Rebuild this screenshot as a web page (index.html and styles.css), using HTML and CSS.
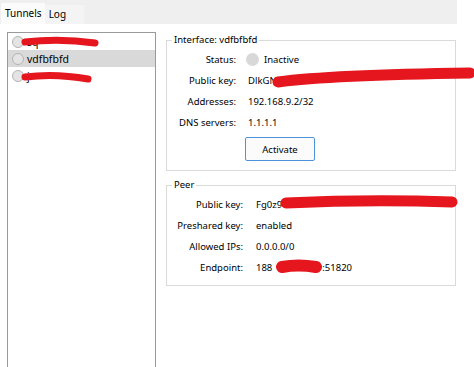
FILE: index.html
```html
<!DOCTYPE html>
<html>
<head>
<meta charset="utf-8">
<link rel="stylesheet" href="styles.css">
</head>
<body>
<div class="window">
  <div class="tabs">
    <div class="tab active">Tunnels</div>
    <div class="tab log">Log</div>
  </div>
  <div class="content">
    <div class="list">
      <div class="item"><span class="dot"></span>sq</div>
      <div class="item selected"><span class="dot"></span>vdfbfbfd</div>
      <div class="item"><span class="dot"></span>j</div>
    </div>
    <div class="details">
      <fieldset class="group iface">
        <legend>Interface: vdfbfbfd</legend>
        <div class="grid">
          <div class="label">Status:</div>
          <div class="value"><span class="status-dot"></span>Inactive</div>
          <div class="label">Public key:</div>
          <div class="value">DlkGN</div>
          <div class="label">Addresses:</div>
          <div class="value">192.168.9.2/32</div>
          <div class="label">DNS servers:</div>
          <div class="value">1.1.1.1</div>
          <div class="label"></div>
          <div class="value"><button class="btn">Activate</button></div>
        </div>
      </fieldset>
      <fieldset class="group peer">
        <legend>Peer</legend>
        <div class="grid">
          <div class="label">Public key:</div>
          <div class="value">Fg0z9</div>
          <div class="label">Preshared key:</div>
          <div class="value">enabled</div>
          <div class="label">Allowed IPs:</div>
          <div class="value">0.0.0.0/0</div>
          <div class="label">Endpoint:</div>
          <div class="value">188<span class="hidden-part"></span>:51820</div>
        </div>
      </fieldset>
    </div>
  </div>
</div>
<svg class="redact" width="474" height="367" viewBox="0 0 474 367">
  <g fill="none" stroke="#e5161d" stroke-linecap="round">
    <path d="M25 42 Q 60 38 95 43" stroke-width="7"/>
    <path d="M25 77 Q 55 73 88 79" stroke-width="7"/>
    <path d="M278 82 Q 330 75 470 73" stroke-width="11"/>
    <path d="M286 203 Q 370 199 452 202" stroke-width="11"/>
    <path d="M282 267 Q 298 264 316 267" stroke-width="12"/>
  </g>
</svg>
</body>
</html>
```
FILE: styles.css
```css
html, body {
  margin: 0;
  background: #ffffff;
}
body {
  position: relative;
  width: 474px;
  height: 367px;
  overflow: hidden;
  font-family: "Noto Sans", "Open Sans", sans-serif;
  font-size: 9.5px;
  color: #000;
}
.window {
  width: 457px;
  height: 367px;
}
.tabs {
  display: flex;
  align-items: flex-end;
  height: 24px;
  padding-left: 1px;
  background: #efefef;
}
.tab {
  height: 19px;
  line-height: 19px;
  padding: 0 4px;
  font-size: 10px;
  background: #f4f4f4;
}
.tab.active {
  height: 21px;
  line-height: 20px;
  padding: 0 3px 0 4px;
  background: #fbfbfb;
}
.tab.log {
  padding: 0 18px 0 4px;
}
.content {
  display: flex;
  padding: 8px 0 0 7px;
}
.list {
  width: 147px;
  height: 340px;
  border: 1px solid #9a9a9a;
  border-bottom: none;
}
.item {
  display: flex;
  align-items: center;
  gap: 3px;
  height: 17px;
  padding-left: 4px;
  font-size: 10.5px;
}
.item.selected {
  background: #d9d9d9;
}
.dot {
  width: 12px;
  height: 12px;
  box-sizing: border-box;
  border-radius: 50%;
  border: 1px solid #b4b4b4;
  background: #e4e4e4;
}
.details {
  margin-left: 10px;
  width: 290px;
}
.group {
  margin: 0;
  padding: 1px 0 9px 0;
  border: 1px solid #dadada;
  min-width: 0;
}
.group legend {
  margin-left: 5px;
  padding: 0 2px;
  line-height: 16px;
  font-size: 9.5px;
}
.group.peer {
  margin-top: 6px;
  padding-bottom: 7px;
}
.grid {
  display: grid;
  grid-template-columns: 69px 1fr;
  grid-template-rows: repeat(4, 21px) auto;
  column-gap: 12px;
  align-items: center;
}
.peer .grid {
  grid-template-columns: 76px 1fr;
  grid-template-rows: repeat(4, 21px);
  column-gap: 13px;
}
.label {
  text-align: right;
  white-space: nowrap;
}
.value {
  display: flex;
  align-items: center;
  white-space: nowrap;
}
.hidden-part {
  display: inline-block;
  width: 50px;
}
.status-dot {
  width: 13px;
  height: 13px;
  border-radius: 50%;
  background: #d8d8d8;
  margin: 0 5px 0 -2px;
}
.btn {
  display: block;
  margin: 4px 0 0 -3px;
  width: 70px;
  height: 24px;
  border: 1px solid #4c93da;
  border-radius: 2px;
  background: #fbfbfb;
  font-family: inherit;
  font-size: 9.5px;
  color: #000;
  padding: 0;
}
.redact {
  position: absolute;
  left: 0;
  top: 0;
  pointer-events: none;
}
```
